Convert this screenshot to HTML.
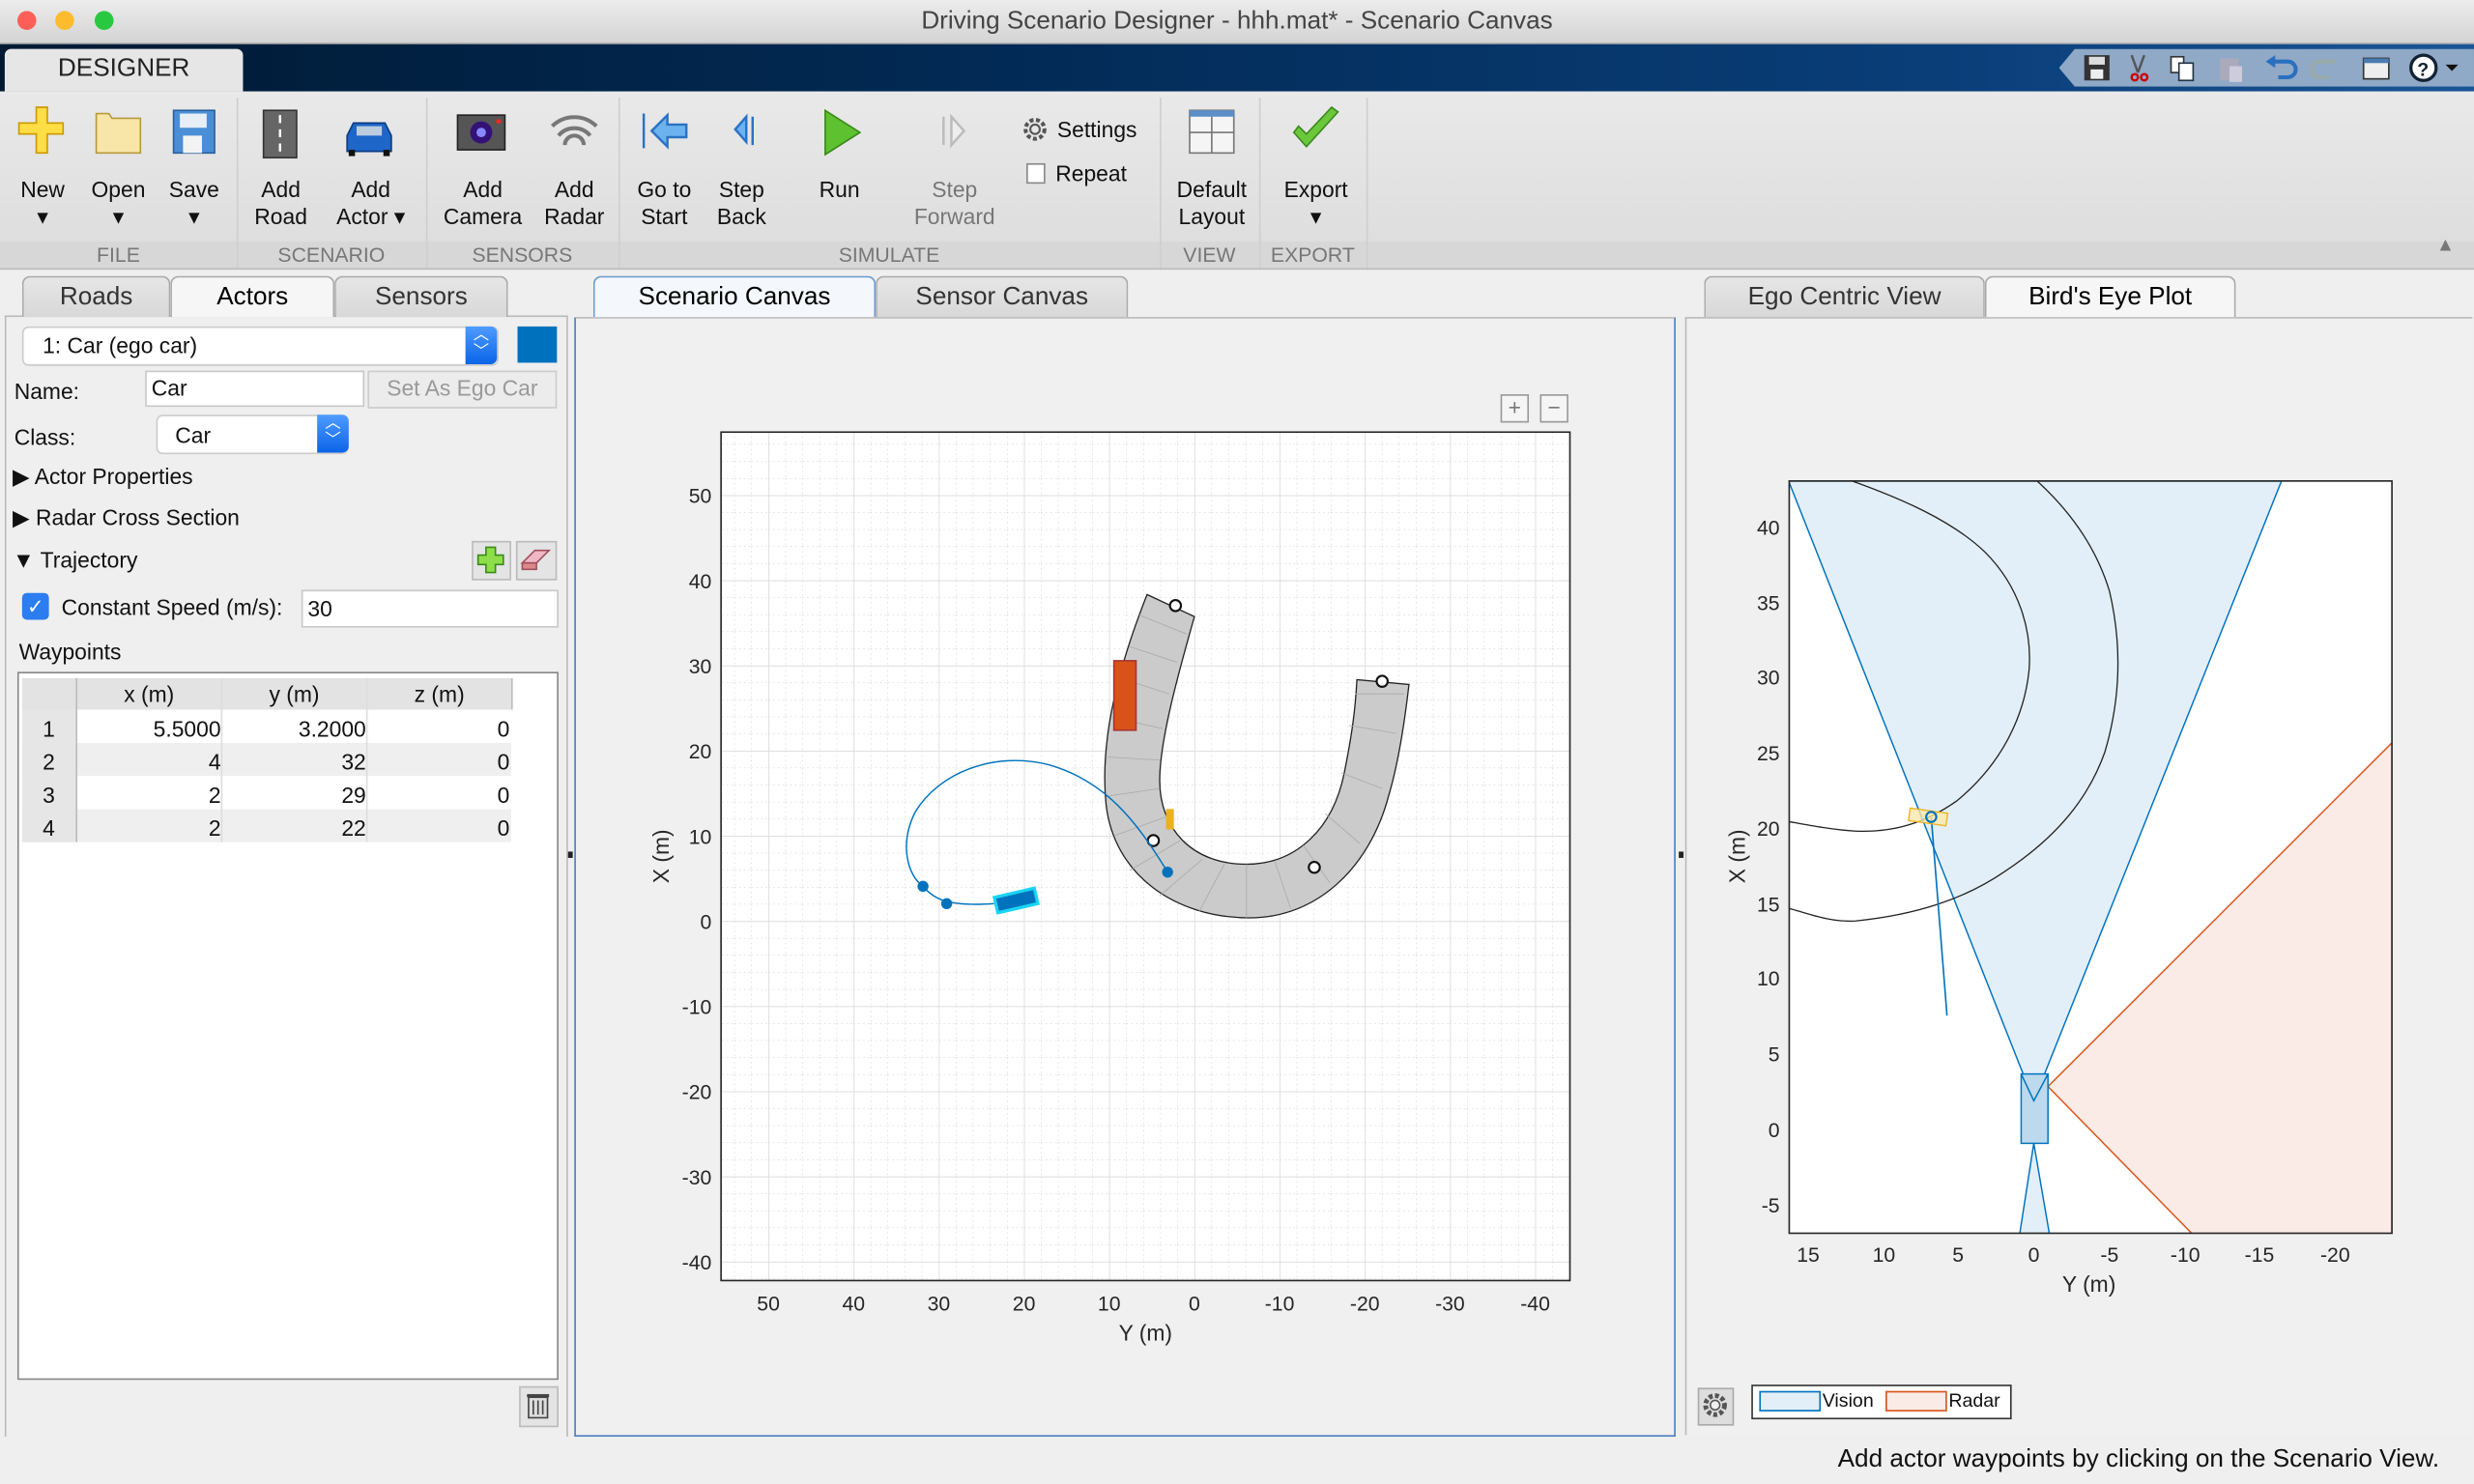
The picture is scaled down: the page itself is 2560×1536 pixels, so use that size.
<!DOCTYPE html>
<html><head><meta charset="utf-8"><style>
html,body{margin:0;padding:0;width:2560px;height:1536px;overflow:hidden;background:#efefef}
#s{position:absolute;left:0;top:0;width:1568px;height:941px;transform:scale(1.63265,1.6323);transform-origin:0 0;font-family:"Liberation Sans","DejaVu Sans",sans-serif;font-size:14px;color:#111;background:#efefef}
.a{position:absolute}
.t{position:absolute;white-space:nowrap}
.lbl{position:absolute;text-align:center;font-size:14px;line-height:17px;color:#111}
.sec{position:absolute;top:153px;height:17px;font-size:13px;color:#777;text-align:center;line-height:17px}
.sep{position:absolute;top:62px;width:1px;height:108px;background:#cfcfcf}
.tab{position:absolute;height:25px;border:1px solid #aaa;border-bottom:none;border-radius:5px 5px 0 0;background:linear-gradient(#e6e6e6,#d8d8d8);font-size:16px;line-height:25px;text-align:center;color:#333}
.tab.on{background:#f6f6f6;color:#000}
.box{position:absolute;background:#fff;border:1px solid #c8c8c8}
</style></head><body><div id="s">
<div class="a" style="left:0;top:0;width:1568px;height:27px;background:linear-gradient(#ececec,#d4d4d4);border-bottom:1px solid #b0b0b0"></div>
<div class="a" style="left:11px;top:7px;width:12px;height:12px;border-radius:6px;background:#fc5f57"></div>
<div class="a" style="left:35px;top:7px;width:12px;height:12px;border-radius:6px;background:#fdbc2e"></div>
<div class="a" style="left:60px;top:7px;width:12px;height:12px;border-radius:6px;background:#28c840"></div>
<div class="t" style="left:0;width:1568px;top:5px;text-align:center;font-size:16px;color:#444">Driving Scenario Designer - hhh.mat* - Scenario Canvas</div>
<div class="a" style="left:0;top:28px;width:1568px;height:30px;background:linear-gradient(90deg,#001a33 0%,#022a55 40%,#0a3f7a 80%,#1a5597 100%)"></div>
<div class="a" style="left:3px;top:31px;width:151px;height:27px;background:#e6e6e6;border-radius:4px 4px 0 0"></div>
<div class="t" style="left:3px;width:151px;top:35px;text-align:center;font-size:16px;color:#222">DESIGNER</div>
<div class="a" style="left:1305px;top:31px;width:263px;height:24px;background:#8fa9c6;clip-path:polygon(10px 0,100% 0,100% 100%,10px 100%,0 50%)"></div>
<svg class="a" style="left:1318px;top:33px" width="240" height="20" viewBox="0 0 240 20">
<rect x="3" y="2" width="16" height="16" fill="#333"/><rect x="6" y="3" width="10" height="5" fill="#ddd"/><rect x="7" y="11" width="8" height="6" fill="#eee"/>
<path d="M33 2 L37 13 M41 2 L37 13" stroke="#555" stroke-width="1.5"/><circle cx="35" cy="16" r="2" fill="none" stroke="#c00" stroke-width="1.5"/><circle cx="41" cy="16" r="2" fill="none" stroke="#c00" stroke-width="1.5"/>
<rect x="58" y="3" width="8" height="10" fill="#fff" stroke="#333"/><rect x="63" y="7" width="9" height="11" fill="#fff" stroke="#234"/>
<rect x="89" y="4" width="12" height="14" fill="#aab" /><rect x="95" y="9" width="8" height="10" fill="#ccd"/>
<path d="M122 6 h10 a5 5 0 0 1 0 10 h-6" fill="none" stroke="#2a6fc0" stroke-width="2.5"/><path d="M118 6 l6 -4 v8z" fill="#2a6fc0"/>
<path d="M162 6 h-10 a5 5 0 0 0 0 10 h6" fill="none" stroke="#9aa" stroke-width="2.5"/>
<rect x="180" y="4" width="16" height="13" fill="#eee" stroke="#333"/><rect x="180" y="4" width="16" height="3" fill="#4a7ab0"/>
<circle cx="218" cy="10" r="8" fill="#fff" stroke="#123" stroke-width="2"/><text x="214" y="15" font-size="12" font-weight="bold" fill="#123">?</text>
<path d="M232 8 h8 l-4 4z" fill="#111"/></svg>
<div class="a" style="left:0;top:58px;width:1568px;height:95px;background:linear-gradient(#e9e9e9,#dedede)"></div>
<div class="a" style="left:0;top:153px;width:1568px;height:17px;background:#d7d7d7;border-bottom:1px solid #bcbcbc"></div>
<div class="sep" style="left:150px"></div><div class="sep" style="left:270px"></div><div class="sep" style="left:392px"></div><div class="sep" style="left:735px"></div><div class="sep" style="left:798px"></div><div class="sep" style="left:866px"></div>
<svg class="a" style="left:0;top:58px" width="880" height="95" viewBox="0 58 880 95">
<path d="M23 68h7v10h10v7h-10v12h-7v-12h-11v-7h11z" fill="#fd4" stroke="#c90"/>
<path d="M61 72h8l2 3h18v22h-28z" fill="#f7e6a8" stroke="#b9983a"/>
<rect x="110" y="70" width="26" height="27" fill="#4a8fd6" stroke="#2a5f9a"/><rect x="114" y="72" width="17" height="9" fill="#e8eef6"/><rect x="116" y="86" width="12" height="11" fill="#f3f3f3"/>
<rect x="167" y="70" width="21" height="30" fill="#666" stroke="#333"/><path d="M177.5 73v5M177.5 82v5M177.5 91v5" stroke="#fff" stroke-width="1.5"/>
<path d="M224 78h20l4 8v10h-28v-10z" fill="#1e66c8" stroke="#0b3a80"/><rect x="226" y="80" width="16" height="6" fill="#bcd"/><rect x="221" y="95" width="4" height="4" fill="#111"/><rect x="243" y="95" width="4" height="4" fill="#111"/>
<rect x="290" y="73" width="30" height="22" fill="#555" stroke="#222"/><circle cx="305" cy="84" r="7" fill="#317"/><circle cx="305" cy="84" r="3" fill="#88f"/><circle cx="316" cy="77" r="1.5" fill="#f22"/>
<path d="M350 80a20 20 0 0 1 28 0M354 86a13 13 0 0 1 20 0M358 92a6 6 0 0 1 12 0" fill="none" stroke="#777" stroke-width="2.5"/>
<path d="M408 72v22M413 83l10-10v6h12v8h-12v6z" fill="#6cb2ee" stroke="#2a72c4" stroke-width="1.5"/>
<path d="M466 82l7-8v16zM477 74v18" fill="#6cb2ee" stroke="#2a72c4" stroke-width="1.5"/>
<path d="M523 70l22 14-22 14z" fill="#5ec230" stroke="#3a8a1a"/>
<path d="M598 74v18M603 74l8 9-8 9z" fill="#eee" stroke="#bbb" stroke-width="1.5"/>
<rect x="754" y="70" width="28" height="27" fill="#f5f5f5" stroke="#777"/><rect x="754" y="70" width="28" height="4" fill="#5c8fc8"/><path d="M768 74v23M754 84h28" stroke="#777"/>
<path d="M820 84l8 9 20-22-4-3-16 17-5-5z" fill="#6bc83a" stroke="#3c8a20"/>
<circle cx="656" cy="82" r="6" fill="none" stroke="#555" stroke-width="2.5" stroke-dasharray="2.5 1.6"/><circle cx="656" cy="82" r="3" fill="none" stroke="#555" stroke-width="1.3"/>
<rect x="651" y="104" width="11" height="12" fill="#fff" stroke="#888"/>
</svg>
<div class="lbl" style="left:7px;width:40px;top:112px">New<br>▾</div>
<div class="lbl" style="left:52px;width:46px;top:112px">Open<br>▾</div>
<div class="lbl" style="left:102px;width:42px;top:112px">Save<br>▾</div>
<div class="lbl" style="left:155px;width:46px;top:112px">Add<br>Road</div>
<div class="lbl" style="left:205px;width:60px;top:112px">Add<br>Actor ▾</div>
<div class="lbl" style="left:278px;width:56px;top:112px">Add<br>Camera</div>
<div class="lbl" style="left:340px;width:48px;top:112px">Add<br>Radar</div>
<div class="lbl" style="left:398px;width:46px;top:112px">Go to<br>Start</div>
<div class="lbl" style="left:448px;width:44px;top:112px">Step<br>Back</div>
<div class="lbl" style="left:512px;width:40px;top:112px">Run</div>
<div class="lbl" style="left:572px;width:66px;top:112px;color:#777">Step<br>Forward</div>
<div class="t" style="left:670px;top:74px;font-size:14px">Settings</div>
<div class="t" style="left:669px;top:102px;font-size:14px">Repeat</div>
<div class="lbl" style="left:740px;width:56px;top:112px">Default<br>Layout</div>
<div class="lbl" style="left:805px;width:58px;top:112px">Export<br>▾</div>
<div class="sec" style="left:0;width:150px">FILE</div><div class="sec" style="left:150px;width:120px">SCENARIO</div><div class="sec" style="left:270px;width:122px">SENSORS</div><div class="sec" style="left:392px;width:343px">SIMULATE</div><div class="sec" style="left:735px;width:63px">VIEW</div><div class="sec" style="left:798px;width:68px">EXPORT</div>
<div class="t" style="left:1544px;top:148px;font-size:12px;color:#777">▲</div>
<div class="a" style="left:3px;top:200px;width:355px;height:710px;border:1px solid #bbb;border-bottom:none;background:#efefef"></div>
<div class="tab" style="left:14px;top:175px;width:92px">Roads</div>
<div class="tab on" style="left:108px;top:175px;width:102px">Actors</div>
<div class="tab" style="left:212px;top:175px;width:108px">Sensors</div>
<div class="a" style="left:14px;top:207px;width:300px;height:23px;background:#fff;border:1px solid #ccc;border-radius:4px"></div>
<div class="a" style="left:295px;top:207px;width:20px;height:24px;background:linear-gradient(#4f9cff,#0a64e8);border-radius:0 4px 4px 0;color:#fff;font-size:10px;text-align:center;line-height:11px">︿<br>﹀</div>
<div class="t" style="left:27px;top:211px">1: Car (ego car)</div>
<div class="a" style="left:328px;top:207px;width:25px;height:23px;background:#0072bd"></div>
<div class="t" style="left:9px;top:240px">Name:</div>
<div class="box" style="left:92px;top:235px;width:137px;height:21px"></div><div class="t" style="left:96px;top:238px">Car</div>
<div class="a" style="left:233px;top:235px;width:118px;height:22px;border:1px solid #ccc;background:#ececec;color:#999;text-align:center;line-height:20px">Set As Ego Car</div>
<div class="t" style="left:9px;top:269px">Class:</div>
<div class="a" style="left:99px;top:263px;width:120px;height:23px;background:#fff;border:1px solid #ccc;border-radius:4px"></div>
<div class="a" style="left:201px;top:263px;width:20px;height:24px;background:linear-gradient(#4f9cff,#0a64e8);border-radius:0 4px 4px 0;color:#fff;font-size:10px;text-align:center;line-height:11px">︿<br>﹀</div>
<div class="t" style="left:111px;top:268px">Car</div>
<div class="t" style="left:8px;top:294px">▶ Actor Properties</div>
<div class="t" style="left:8px;top:320px">▶ Radar Cross Section</div>
<div class="t" style="left:8px;top:347px">▼ Trajectory</div>
<div class="a" style="left:299px;top:343px;width:23px;height:23px;background:#e4e4e4;border:1px solid #bbb"></div>
<svg class="a" style="left:301px;top:345px" width="20" height="20"><path d="M7 2h6v5h5v6h-5v5h-6v-5h-5v-6h5z" fill="#8dde4a" stroke="#3a8a1a"/></svg>
<div class="a" style="left:327px;top:343px;width:24px;height:23px;background:#e4e4e4;border:1px solid #bbb"></div>
<svg class="a" style="left:329px;top:346px" width="20" height="18"><path d="M2 11l8-8h9l-8 8z" fill="#f0b8c4" stroke="#a05060"/><path d="M2 11h9v4h-9z" fill="#d88" stroke="#a05060"/></svg>
<div class="a" style="left:14px;top:376px;width:17px;height:17px;background:#2b7df0;border-radius:3px;color:#fff;text-align:center;font-size:13px;line-height:17px">✓</div>
<div class="t" style="left:39px;top:377px">Constant Speed (m/s):</div>
<div class="box" style="left:191px;top:374px;width:161px;height:22px"></div><div class="t" style="left:195px;top:378px">30</div>
<div class="t" style="left:12px;top:405px">Waypoints</div>
<div class="box" style="left:11px;top:426px;width:341px;height:447px;border-color:#888"></div>
<div class="a" style="left:14px;top:430px;width:310px;height:20px;background:#e3e3e3"></div>
<div class="a" style="left:14px;top:450px;width:310px;height:84px;background:linear-gradient(#fff 0 25%,#efefef 25% 50%,#fff 50% 75%,#efefef 75%)"></div>
<div class="a" style="left:14px;top:450px;width:34px;height:84px;background:#e6e6e6"></div>
<div class="a" style="left:48px;top:430px;width:1px;height:104px;background:#bbb"></div>
<div class="a" style="left:140px;top:430px;width:1px;height:104px;background:#ddd"></div>
<div class="a" style="left:232px;top:430px;width:1px;height:104px;background:#ddd"></div>
<div class="a" style="left:324px;top:430px;width:1px;height:20px;background:#bbb"></div>
<div class="t" style="left:49px;width:91px;top:432px;text-align:center">x (m)</div>
<div class="t" style="left:141px;width:91px;top:432px;text-align:center">y (m)</div>
<div class="t" style="left:233px;width:91px;top:432px;text-align:center">z (m)</div>
<div class="a" style="left:14px;top:452px;width:322px;font-size:14px;line-height:21px">
<div style="position:relative;height:21px"><span class="t" style="left:13px">1</span><span class="t" style="right:196px">5.5000</span><span class="t" style="right:104px">3.2000</span><span class="t" style="right:13px">0</span></div>
<div style="position:relative;height:21px"><span class="t" style="left:13px">2</span><span class="t" style="right:196px">4</span><span class="t" style="right:104px">32</span><span class="t" style="right:13px">0</span></div>
<div style="position:relative;height:21px"><span class="t" style="left:13px">3</span><span class="t" style="right:196px">2</span><span class="t" style="right:104px">29</span><span class="t" style="right:13px">0</span></div>
<div style="position:relative;height:21px"><span class="t" style="left:13px">4</span><span class="t" style="right:196px">2</span><span class="t" style="right:104px">22</span><span class="t" style="right:13px">0</span></div></div>
<div class="a" style="left:329px;top:879px;width:23px;height:24px;border:1px solid #bbb;background:#e4e4e4"></div>
<svg class="a" style="left:332px;top:882px" width="18" height="18"><rect x="3" y="4" width="12" height="13" fill="#ddd" stroke="#444"/><rect x="2" y="2" width="14" height="2" fill="#444"/><path d="M6 6v9M9 6v9M12 6v9" stroke="#444"/></svg>
<div class="a" style="left:364px;top:201px;width:696px;height:708px;border:1px solid #4a7fc0;border-top-color:#bbb;background:#f0f0f0"></div>
<div class="tab on" style="left:376px;top:175px;width:177px;border-color:#6a9ad0;background:#f4f7fb">Scenario Canvas</div>
<div class="tab" style="left:555px;top:175px;width:158px">Sensor Canvas</div>
<div class="a" style="left:951px;top:250px;width:16px;height:16px;border:1px solid #999;background:#f5f5f5;text-align:center;line-height:15px;color:#777">+</div>
<div class="a" style="left:976px;top:250px;width:16px;height:16px;border:1px solid #999;background:#f5f5f5;text-align:center;line-height:15px;color:#777">−</div>
<div class="a" style="left:1068px;top:201px;width:498px;height:708px;border-left:1px solid #bbb;border-top:1px solid #bbb;background:#f0f0f0"></div>
<div class="tab" style="left:1080px;top:175px;width:176px">Ego Centric View</div>
<div class="tab on" style="left:1258px;top:175px;width:157px">Bird's Eye Plot</div>
<div class="a" style="left:1076px;top:880px;width:21px;height:22px;border:1px solid #aaa;background:#ddd"></div>
<svg class="a" style="left:1077px;top:881px" width="20" height="20"><circle cx="10" cy="10" r="6" fill="none" stroke="#555" stroke-width="3" stroke-dasharray="2.5 1.5"/><circle cx="10" cy="10" r="3" fill="#eee" stroke="#555"/></svg>
<div class="a" style="left:1110px;top:878px;width:163px;height:20px;border:1px solid #333;background:#fff"></div>
<div class="a" style="left:1115px;top:882px;width:37px;height:11px;border:1px solid #0072bd;background:#e3eff8"></div>
<div class="t" style="left:1155px;top:881px;font-size:12px">Vision</div>
<div class="a" style="left:1195px;top:882px;width:37px;height:11px;border:1px solid #d95319;background:#fbebe6"></div>
<div class="t" style="left:1235px;top:881px;font-size:12px">Radar</div>
<div class="t" style="right:22px;top:917px;font-size:16px">Add actor waypoints by clicking on the Scenario View.</div>
<div class="a" style="left:360px;top:540px;width:3px;height:4px;background:#222"></div>
<div class="a" style="left:1064px;top:540px;width:3px;height:4px;background:#222"></div>
<svg class="a" style="left:0;top:0" width="1568" height="941" viewBox="0 0 1568 941" font-family="Liberation Sans, sans-serif" font-size="13">
<defs>
<pattern id="mn" x="757" y="584" width="10.8" height="10.8" patternUnits="userSpaceOnUse"><path d="M0 0V10.8M0 0H10.8" stroke="#c8c8c8" stroke-width="0.6" stroke-dasharray="1 2"/></pattern>
<pattern id="mj" x="757" y="584" width="54" height="54" patternUnits="userSpaceOnUse"><path d="M0 0V54M0 0H54" stroke="#dcdcdc" stroke-width="1"/></pattern>
</defs>
<rect x="457" y="274" width="538" height="538" fill="#fff"/>
<rect x="457" y="274" width="538" height="538" fill="url(#mn)"/>
<rect x="457" y="274" width="538" height="538" fill="url(#mj)"/>
<rect x="457" y="274" width="538" height="538" fill="none" stroke="#262626"/>
<g fill="#262626" text-anchor="end">
<text x="451" y="319">50</text><text x="451" y="373">40</text><text x="451" y="427">30</text><text x="451" y="481">20</text><text x="451" y="535">10</text><text x="451" y="589">0</text><text x="451" y="643">-10</text><text x="451" y="697">-20</text><text x="451" y="751">-30</text><text x="451" y="805">-40</text></g>
<g fill="#262626" text-anchor="middle">
<text x="487" y="831">50</text><text x="541" y="831">40</text><text x="595" y="831">30</text><text x="649" y="831">20</text><text x="703" y="831">10</text><text x="757" y="831">0</text><text x="811" y="831">-10</text><text x="865" y="831">-20</text><text x="919" y="831">-30</text><text x="973" y="831">-40</text>
<text x="726" y="850" font-size="14">Y (m)</text></g>
<text transform="translate(424,543) rotate(-90)" text-anchor="middle" font-size="14" fill="#262626">X (m)</text>
<path d="M727 377 L757 391 C746 430 735 470 735 495 C735 525 755 548 790 548 C822 548 845 525 852 490 C857 465 859 450 860 431 L893 434 C890 460 886 485 880 505 C868 550 835 582 792 582 C745 582 706 555 701 510 C697 470 708 425 727 377 Z" fill="#cbcbcb" stroke="#222" stroke-width="0.8"/>
<g stroke="#aaa" stroke-width="0.5"><path d="M722 390L752 402M716 410L746 420M710 430L741 440M705 455L737 462M702 480L735 482M701 505L735 500M706 530L739 518M716 552L748 533M735 568L762 545M760 578L776 548M790 582L790 548M818 576L808 546M843 560L826 536M862 535L840 516M876 500L850 490M885 465L855 460M890 440L859 440"/></g>
<rect x="706" y="419" width="14" height="44" fill="#d95319" stroke="#a33"/>
<rect x="739" y="513" width="5" height="13" fill="#edb120"/>
<g fill="#fff" stroke="#111" stroke-width="1.3"><circle cx="745" cy="384" r="3.5"/><circle cx="876" cy="432" r="3.5"/><circle cx="731" cy="533" r="3.5"/><circle cx="833" cy="550" r="3.5"/></g>
<path d="M740 553 C720 520 700 495 665 485 C630 476 595 490 580 515 C570 535 575 555 585 562 C592 570 600 575 630 573" fill="none" stroke="#0072bd" stroke-width="0.9"/>
<g fill="#0072bd"><circle cx="585" cy="562" r="3.5"/><circle cx="600" cy="573" r="3.5"/><circle cx="740" cy="553" r="3.5"/></g>
<g transform="translate(644,571) rotate(-13)"><rect x="-13" y="-5" width="26" height="10" fill="#0072bd" stroke="#1ad4f4" stroke-width="2"/></g>
<rect x="1134" y="305" width="382" height="477" fill="#fff"/>
<clipPath id="bc"><rect x="1134" y="305" width="382" height="477"/></clipPath>
<g clip-path="url(#bc)">
<path d="M1289 698 L1134 306 L1134 305 L1446 305 Z" fill="#e3eff8" stroke="#0072bd" stroke-width="0.9"/>
<path d="M1289 725 L1280 783 L1299 783 Z" fill="#e3eff8" stroke="#0072bd" stroke-width="0.9"/>
<path d="M1298 689 L1516 471 L1516 783 L1390 783 Z" fill="#fbebe6" stroke="#d95319" stroke-width="0.9"/>
<path d="M1171 304 C1205 316 1237 330 1258 350 C1280 372 1288 400 1286 425 C1283 455 1268 485 1240 508 C1220 522 1200 528 1176 527 C1160 526 1145 523 1134 521" fill="none" stroke="#222" stroke-width="0.8"/>
<path d="M1290 304 C1310 322 1328 345 1337 375 C1344 405 1345 440 1334 477 C1324 505 1305 530 1270 553 C1245 570 1215 580 1176 584 C1160 585 1145 579 1134 576" fill="none" stroke="#222" stroke-width="0.8"/>
<path d="M1224 518 L1234 644" stroke="#0072bd" stroke-width="1"/>
<g transform="translate(1222,518) rotate(8)"><rect x="-12" y="-4" width="24" height="8" fill="#fbe7a8" fill-opacity=".8" stroke="#edb120" stroke-width=".8"/></g>
<circle cx="1224" cy="518" r="3.2" fill="none" stroke="#0072bd" stroke-width="1.3"/>
<rect x="1281" y="681" width="17" height="44" fill="#bcd9ee" stroke="#0072bd" stroke-width="0.9"/>
<path d="M1281 681 L1289 698 L1298 681" fill="none" stroke="#0072bd" stroke-width="0.9"/>
</g>
<rect x="1134" y="305" width="382" height="477" fill="none" stroke="#262626"/>
<g fill="#262626" text-anchor="end">
<text x="1128" y="339">40</text><text x="1128" y="387">35</text><text x="1128" y="434">30</text><text x="1128" y="482">25</text><text x="1128" y="530">20</text><text x="1128" y="578">15</text><text x="1128" y="625">10</text><text x="1128" y="673">5</text><text x="1128" y="721">0</text><text x="1128" y="769">-5</text></g>
<g fill="#262626" text-anchor="middle">
<text x="1146" y="800">15</text><text x="1194" y="800">10</text><text x="1241" y="800">5</text><text x="1289" y="800">0</text><text x="1337" y="800">-5</text><text x="1385" y="800">-10</text><text x="1432" y="800">-15</text><text x="1480" y="800">-20</text>
<text x="1324" y="819" font-size="14">Y (m)</text></g>
<text transform="translate(1106,543) rotate(-90)" text-anchor="middle" font-size="14" fill="#262626">X (m)</text>
</svg>
</div></body></html>
